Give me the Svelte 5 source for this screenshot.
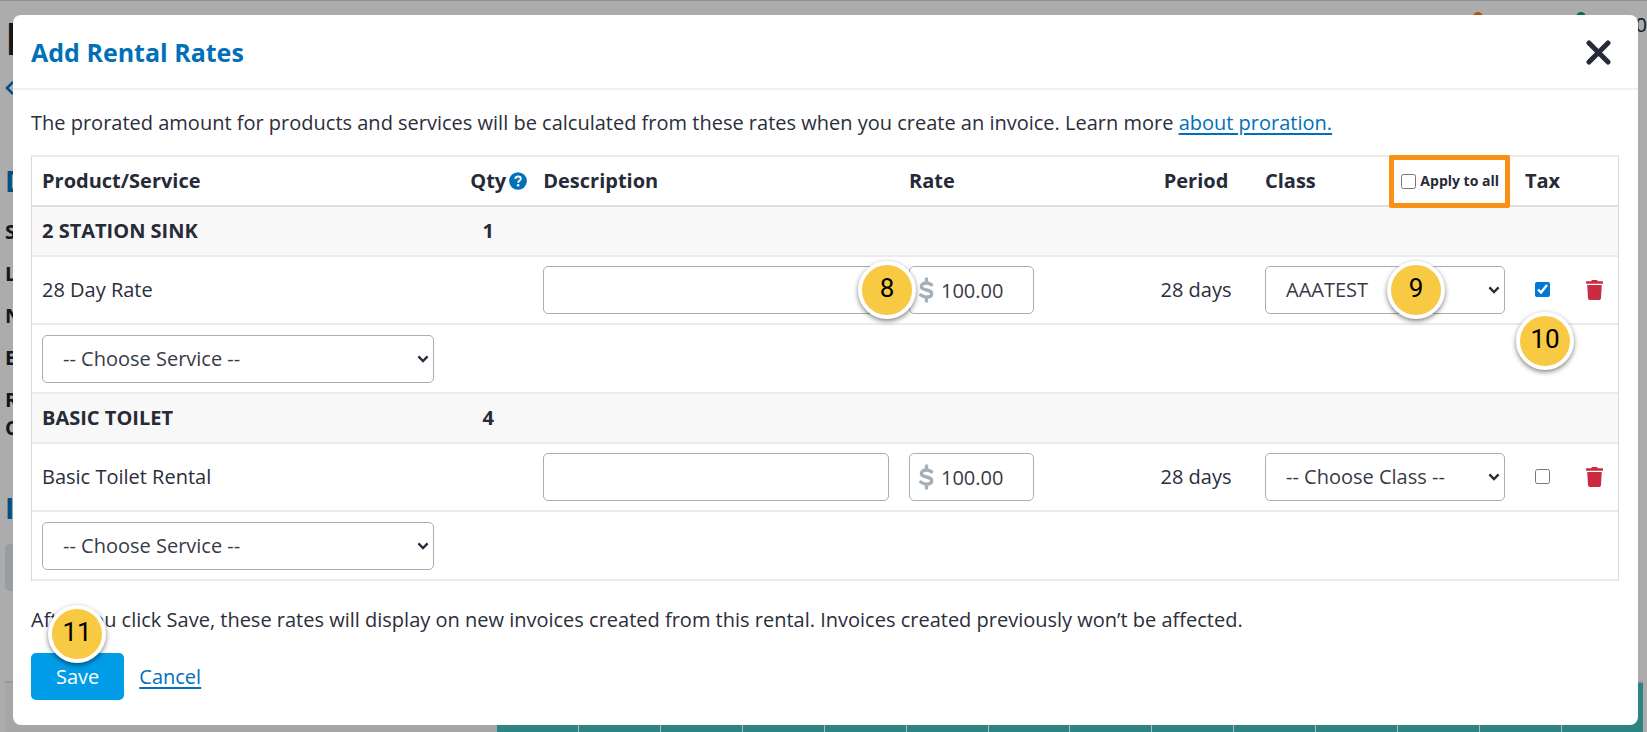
<script lang="ts">
    type Rate = {
        id: string;
        group: string;
        qty: number;
        name: string;
        amount: string;
        period: string;
        className: string;
        taxed: boolean;
    };

    let rates: Rate[] = [
        { id: 'sink', group: '2 STATION SINK', qty: 1, name: '28 Day Rate', amount: '100.00', period: '28 days', className: 'AAATEST', taxed: true },
        { id: 'toilet', group: 'BASIC TOILET', qty: 4, name: 'Basic Toilet Rental', amount: '100.00', period: '28 days', className: '-- Choose Class --', taxed: false }
    ];

    let applyToAll = false;

    const details = ['S', 'L', 'N', 'E', 'R'];
    const days = Array(14).fill(0);

    function removeRate(id: string) {
        rates = rates.filter((rate) => rate.id !== id);
    }

    function copyClass() {
        if (!applyToAll || rates.length === 0) return;
        const first = rates[0].className;
        rates = rates.map((rate) => ({ ...rate, className: first }));
    }
</script>

{#snippet chevron()}
    <svg class="chevron" width="12" height="8" viewBox="0 0 12 8" aria-hidden="true">
        <path d="M1.4 1.4 6 6l4.6-4.6" fill="none" stroke="currentColor" stroke-width="2.3" />
    </svg>
{/snippet}

<div class="page">
    <!-- Page behind the dialog -->
    <div class="behind" aria-hidden="true">
        <div class="behind__top">
            <span class="behind__title">R</span>
            <span class="notice notice--orange"></span>
            <span class="notice notice--green"></span>
            <span class="behind__count">0</span>
        </div>
        <svg class="behind__back" width="9" height="14" viewBox="0 0 9 14">
            <path d="M8 1 2 7l6 6" fill="none" stroke="currentColor" stroke-width="2.5" />
        </svg>
        <span class="behind__heading">D</span>
        <div class="behind__details">
            {#each details as letter}
                <span>{letter}</span>
            {/each}
            <span class="tight">C</span>
        </div>
        <span class="behind__heading">I</span>
        <div class="behind__button"></div>
        <div class="behind__calendar">
            <div class="behind__label"></div>
            {#each days as _}
                <div class="behind__day"></div>
            {/each}
        </div>
    </div>

    <div class="modal" role="dialog" aria-labelledby="modal-title">
        <header class="modal__header">
            <h1 id="modal-title">Add Rental Rates</h1>
            <button class="icon-btn" aria-label="Close">
                <svg width="25" height="25" viewBox="0 0 25 25" aria-hidden="true">
                    <path d="M3 3l19 19M22 3 3 22" fill="none" stroke="currentColor" stroke-width="5" stroke-linecap="round" />
                </svg>
            </button>
        </header>

        <div class="modal__body">
            <p>
                The prorated amount for products and services will be calculated from these rates when you create an invoice. Learn more <a href="#proration">about proration.</a>
            </p>

            <table>
                <colgroup>
                    <col class="col-name" />
                    <col class="col-qty" />
                    <col />
                    <col class="col-rate" />
                    <col class="col-period" />
                    <col class="col-class" />
                    <col class="col-tax" />
                    <col class="col-remove" />
                </colgroup>
                <thead>
                    <tr>
                        <th>Product/Service</th>
                        <th>
                            <span class="qty-head">
                                <span class="qty">Qty</span>
                                <svg class="help" width="18" height="18" viewBox="0 0 512 512" aria-hidden="true">
                                    <circle cx="256" cy="256" r="252" fill="#0170b9" />
                                    <path d="M178 198c8-46 38-70 80-70 44 0 78 26 78 66 0 50-72 52-76 112" fill="none" stroke="#fff" stroke-width="54" />
                                    <circle cx="260" cy="376" r="36" fill="#fff" />
                                </svg>
                            </span>
                        </th>
                        <th>Description</th>
                        <th>Rate</th>
                        <th class="center">Period</th>
                        <th class="anchor">
                            <span class="class-head">
                                Class
                                <label class="apply">
                                    <input type="checkbox" bind:checked={applyToAll} on:change={copyClass} />
                                    Apply to all
                                </label>
                            </span>
                            <span class="highlight"></span>
                        </th>
                        <th class="center">Tax</th>
                        <th></th>
                    </tr>
                </thead>
                <tbody>
                    {#each rates as rate, i (rate.id)}
                        <tr class="group">
                            <th>{rate.group}</th>
                            <th><span class="qty">{rate.qty}</span></th>
                            <td colspan="6"></td>
                        </tr>
                        <tr class="item">
                            <td>{rate.name}</td>
                            <td></td>
                            <td class="anchor">
                                <input class="field" type="text" aria-label="Description" />
                                {#if i === 0}<span class="marker marker--rate">8</span>{/if}
                            </td>
                            <td>
                                <div class="money">
                                    <svg width="15" height="26" viewBox="0 0 15 26" aria-hidden="true">
                                        <path d="M7.500 2v4M7.500 20v4M12.500 7.800C11 6.600 9.300 6 7.500 6 4.600 6 2.400 7.300 2.400 9.500c0 4.700 10.300 2.300 10.300 7 0 2.300-2.200 3.600-5.100 3.600-2.200 0-4.200-.8-5.800-2.100" fill="none" stroke="currentColor" stroke-width="3.400" stroke-linecap="round" />
                                    </svg>
                                    <input class="field" type="text" aria-label="Rate" bind:value={rate.amount} />
                                </div>
                            </td>
                            <td class="center">{rate.period}</td>
                            <td class="anchor">
                                <div class="select">
                                    <select class="field" aria-label="Class" bind:value={rate.className}>
                                        <option>-- Choose Class --</option>
                                        <option>AAATEST</option>
                                    </select>
                                    {@render chevron()}
                                </div>
                                {#if i === 0}<span class="marker marker--class">9</span>{/if}
                            </td>
                            <td class="center anchor">
                                <input type="checkbox" aria-label="Tax" bind:checked={rate.taxed} />
                                {#if i === 0}<span class="marker marker--tax">10</span>{/if}
                            </td>
                            <td class="center">
                                <button class="icon-btn remove" aria-label="Remove {rate.name}" on:click={() => removeRate(rate.id)}>
                                    <svg width="17" height="20" viewBox="0 0 448 512" preserveAspectRatio="none" aria-hidden="true">
                                        <path fill="currentColor" d="M432 32H312l-9.400-18.700A24 24 0 0 0 281.100 0H166.800a23.720 23.720 0 0 0-21.400 13.300L136 32H16A16 16 0 0 0 0 48v32a16 16 0 0 0 16 16h416a16 16 0 0 0 16-16V48a16 16 0 0 0-16-16zM53.200 467a48 48 0 0 0 47.900 45h245.800a48 48 0 0 0 47.900-45L416 128H32z" />
                                    </svg>
                                </button>
                            </td>
                        </tr>
                        <tr class="service">
                            <td>
                                <div class="select select--service">
                                    <select class="field" aria-label="Service">
                                        <option>-- Choose Service --</option>
                                    </select>
                                    {@render chevron()}
                                </div>
                            </td>
                            <td colspan="7"></td>
                        </tr>
                    {/each}
                </tbody>
            </table>

            <p>After you click Save, these rates will display on new invoices created from this rental. Invoices created previously won’t be affected.</p>

            <div class="actions">
                <span class="anchor">
                    <button class="save">Save</button>
                    <span class="marker marker--save">11</span>
                </span>
                <a href="#cancel">Cancel</a>
            </div>
        </div>
    </div>
</div>

<style>
    :global(body) {
        background: #acacac;
    }

    .page {
        position: relative;
        display: flow-root;
        min-height: 100vh;
        overflow: hidden;
        box-sizing: border-box;
        color: #2b2e3b;
        font-family: "Open Sans", "Noto Sans", sans-serif;
        font-size: 20px;
        line-height: 28px;
    }

    /* Dimmed page */
    .behind {
        position: absolute;
        inset: 0;
        display: flex;
        flex-direction: column;
        padding-left: 5px;
        border-top: 1px solid #8c8c8c;
        font-weight: 700;
        color: #14161d;
    }

    .behind__top {
        display: flex;
        align-items: flex-start;
        height: 80px;
    }

    .behind__title {
        flex: 1;
        font-size: 44px;
        line-height: 74px;
    }

    .notice {
        width: 10px;
        height: 10px;
        margin: 11px 93px 0 0;
        border-radius: 50%;
    }
    .notice--orange { background: #b5500f; }
    .notice--green { background: #0c6b48; margin-right: 50px; }

    .behind__count {
        font-weight: 400;
        line-height: 48px;
    }

    .behind__back {
        color: #014f83;
    }

    .behind__heading {
        margin-top: 66px;
        color: #014f83;
        font-size: 28px;
        line-height: 40px;
    }

    .behind__details {
        display: flex;
        flex-direction: column;
        gap: 14px;
        padding-top: 17px;
        margin-bottom: -20px;
    }
    .behind__details .tight { margin-top: -14px; }

    .behind__button {
        width: 80px;
        height: 47px;
        margin-top: 16px;
        border-radius: 5px;
        background: #989da2;
    }

    .behind__calendar {
        flex: 1;
        display: flex;
        margin: 90px 4px 0 0;
        border-top: 2px solid #989898;
    }
    .behind__label {
        width: 492px;
        background: #a6a6a6;
    }
    .behind__day {
        flex: 1;
        background: #2d8483;
    }
    .behind__day + .behind__day { border-left: 1px solid #a3c0bf; }

    /* Dialog */
    .modal {
        position: relative;
        margin: 15px 9px 8px 13px;
        border-radius: 8px;
        background: #fff;
    }

    .modal__header {
        display: flex;
        align-items: center;
        justify-content: space-between;
        padding: 21px 27px 19px 18px;
        border-bottom: 2px solid #efefef;
    }

    h1 {
        margin: 0;
        color: #0170b9;
        font-size: 25px;
        line-height: 33px;
    }

    .modal__body {
        padding: 19px 19px 25px 18px;
    }

    p {
        margin: 0;
    }

    a {
        color: #0170b9;
        text-decoration: underline;
        text-underline-offset: 3px;
    }

    .icon-btn {
        display: flex;
        padding: 0;
        border: 0;
        background: none;
        color: #272a37;
        cursor: pointer;
    }
    .remove {
        margin: 0 auto;
        color: #cb2b41;
    }

    table {
        width: 100%;
        margin: 18px 0 25px;
        table-layout: fixed;
        border-collapse: separate;
        border-spacing: 0;
        border: 1px solid #d9d9d9;
        border-top: 2px solid #ebebeb;
        border-bottom: 0;
        box-sizing: border-box;
    }

    .col-name { width: 27%; }
    .col-qty { width: 73px; }
    .col-rate { width: 238px; }
    .col-period { width: 118px; }
    .col-class { width: 260px; }
    .col-tax { width: 55px; }
    .col-remove { width: 48px; }

    th, td {
        padding: 0 10px;
        border-bottom: 2px solid #ebebeb;
        text-align: left;
        vertical-align: middle;
    }

    th { color: #272a37; }

    thead th {
        height: 48px;
        border-bottom-color: #dfdfdf;
    }
    .group th, .group td {
        height: 48px;
        background: #f8f8f8;
    }
    .item td { height: 66px; }
    .service td { height: 67px; }

    th.center, td.center {
        padding: 0;
        text-align: center;
    }

    .anchor { position: relative; }

    .qty-head {
        display: flex;
        align-items: center;
        gap: 3px;
    }
    .help { flex: none; }
    .qty {
        display: inline-block;
        min-width: 36px;
        text-align: center;
    }

    .class-head {
        display: flex;
        align-items: center;
        justify-content: space-between;
    }
    .apply {
        display: flex;
        align-items: center;
        gap: 4px;
        padding-right: 6px;
        font-size: 14px;
    }

    .highlight {
        position: absolute;
        top: -2px;
        right: 5px;
        bottom: -3px;
        width: 121px;
        box-sizing: border-box;
        border: 5px solid #fa9014;
        border-radius: 2px;
        pointer-events: none;
    }

    input[type="checkbox"] {
        width: 15px;
        height: 15px;
        margin: 0;
        accent-color: #0078d7;
    }

    .field {
        display: block;
        width: 100%;
        height: 48px;
        box-sizing: border-box;
        padding: 0 20px;
        border: 1px solid #a5afb8;
        border-radius: 5px;
        background: #fff;
        color: #383b47;
        font: inherit;
        appearance: none;
    }

    .select { position: relative; }
    .select--service { width: 96%; }

    .chevron {
        position: absolute;
        top: 20px;
        right: 5px;
        color: #272a37;
        pointer-events: none;
    }

    .money {
        position: relative;
        width: 125px;
    }
    .money svg {
        position: absolute;
        top: 11px;
        left: 10px;
        color: #a5afb8;
    }
    .money .field { padding: 0 10px 0 31px; }

    .actions {
        display: flex;
        align-items: center;
        gap: 15px;
        margin-top: 19px;
    }

    .save {
        display: block;
        height: 47px;
        padding: 0 25px;
        border: 0;
        border-radius: 5px;
        background: #009ce8;
        color: #fff;
        font: inherit;
        cursor: pointer;
    }

    /* Numbered step markers */
    .marker {
        position: absolute;
        z-index: 1;
        width: 58px;
        height: 58px;
        box-sizing: border-box;
        border: 4px solid #fff;
        border-radius: 50%;
        background: #f8c942;
        box-shadow: 0 2px 5px rgba(0, 0, 0, 0.5);
        color: #000;
        font-family: Roboto, "Liberation Sans", sans-serif;
        font-size: 26px;
        line-height: 46px;
        text-align: center;
        pointer-events: none;
    }
    .marker--rate { top: 4px; right: -17px; }
    .marker--class { top: 4px; left: 132px; }
    .marker--tax { top: 55px; left: 1px; }
    .marker--save { top: -48px; left: 17px; }
</style>
